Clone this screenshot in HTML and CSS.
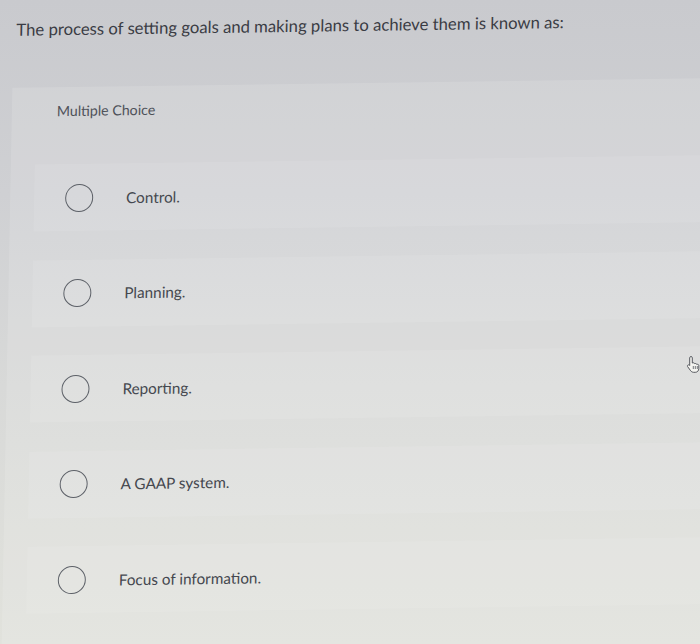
FILE: index.html
```html
<!DOCTYPE html>
<html lang="en">
<head>
<meta charset="utf-8">
<title>Multiple Choice</title>
<link rel="stylesheet" href="styles.css">
</head>
<body>
<div class="page">
  <p class="question">The process of setting goals and making plans to achieve them is known as:</p>
  <section class="panel">
    <div class="label">Multiple Choice</div>
    <ul class="options">
      <li class="option"><span class="radio"></span><span class="text">Control.</span></li>
      <li class="option"><span class="radio"></span><span class="text">Planning.</span></li>
      <li class="option"><span class="radio"></span><span class="text">Reporting.</span></li>
      <li class="option"><span class="radio"></span><span class="text">A GAAP system.</span></li>
      <li class="option"><span class="radio"></span><span class="text">Focus of information.</span></li>
    </ul>
  </section>
</div>
<svg class="cursor" width="16" height="18" viewBox="0 0 16 18" aria-hidden="true">
  <path d="M5 1.5c.8 0 1.3.6 1.3 1.3V8l1-.2c.6-.1 1.2.2 1.3.8l.9-.1c.6 0 1.1.3 1.2.9l.8-.1c.7 0 1.3.5 1.3 1.2v3.2c0 2-1.5 3.6-3.5 3.6H7.6c-1.2 0-2.2-.6-2.9-1.5L1.6 11.6c-.4-.6-.2-1.300.4-1.6.5-.3 1.1-.2 1.5.2l.2.3V2.8c0-.7.6-1.3 1.3-1.3z" fill="#f4f4f0" stroke="#55585e" stroke-width="1"/>
  <path d="M7.3 11v3M9.3 11v3M11.3 11v3" stroke="#55585e" stroke-width=".8"/>
</svg>
</body>
</html>
```
FILE: styles.css
```css
html, body {
  margin: 0;
  padding: 0;
}
body {
  width: 700px;
  height: 644px;
  overflow: hidden;
  position: relative;
  background: linear-gradient(180deg, #c9cace 0%, #cfd0d3 30%, #d8d9d8 60%, #e1e2dc 100%);
  font-family: "Lato", "Liberation Sans", sans-serif;
}
.page {
  transform-origin: 0 0;
  transform: rotate(-0.8deg) skewX(-1.9deg);
  width: 760px;
  padding-top: 19px;
}
.question {
  margin: 0 0 0 17px;
  font-size: 16.7px;
  color: #3a3c44;
  line-height: 22px;
}
.panel {
  margin: 47px 0 0 14px;
  background: rgba(255, 255, 255, 0.12);
  padding: 14px 0 40px 0;
}
.label {
  margin-left: 45px;
  font-size: 14.2px;
  color: #4e5159;
  line-height: 20px;
}
.options {
  list-style: none;
  margin: 43px 0 0 24px;
  padding: 0;
  display: flex;
  flex-direction: column;
  gap: 28.5px;
}
.option {
  height: 67px;
  display: flex;
  align-items: center;
  padding-left: 31px;
  background: rgba(255, 255, 255, 0.09);
}
.radio {
  width: 26px;
  height: 26px;
  border: 1.6px solid #5d6168;
  border-radius: 50%;
  flex: none;
}
.text {
  margin-left: 33px;
  font-size: 15.3px;
  color: #45484f;
}
.cursor {
  position: absolute;
  left: 686px;
  top: 355px;
}
```
